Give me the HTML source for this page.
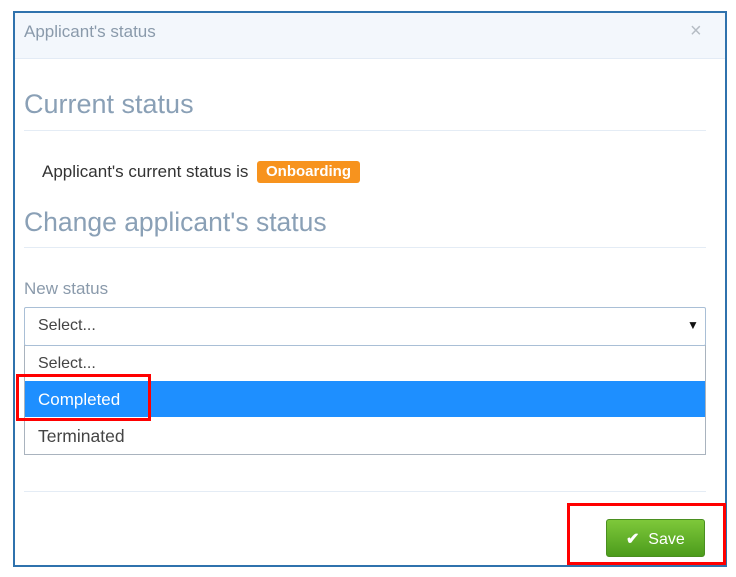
<!DOCTYPE html>
<html><head><style>
body{margin:0;width:736px;height:577px;background:#fff;position:relative;overflow:hidden;font-family:"Liberation Sans",sans-serif}
div,span{position:absolute;box-sizing:border-box}
.modal{left:13px;top:11px;width:714px;height:556px;border:2px solid #2f72ad;background:#fff}
.hdr{left:15px;top:13px;width:710px;height:46px;background:#f3f7fc;border-bottom:1px solid #e3ebf5}
.t{white-space:nowrap}
.line{height:1px;background:#e4ecf5;left:24px;width:682px}
</style></head><body>
<div class="modal"></div>
<div class="hdr"></div>
<div class="t" style="left:24px;top:22px;font-size:17px;color:#8a9aab">Applicant's status</div>
<div class="t" style="left:690px;top:20px;font-size:20px;color:#b5bcc4">×</div>
<div class="t" style="left:24px;top:89px;font-size:27px;color:#8aa0b6">Current status</div>
<div class="line" style="top:130px"></div>
<div class="t" style="left:42px;top:162px;font-size:17px;color:#333">Applicant's current status is</div>
<div class="t" style="left:257px;top:161px;width:103px;height:22px;background:#f7931e;border-radius:3px;color:#fff;font-weight:bold;font-size:15px;text-align:center;line-height:22px">Onboarding</div>
<div class="t" style="left:24px;top:207px;font-size:26.5px;color:#8aa0b6">Change applicant's status</div>
<div class="line" style="top:247px"></div>
<div class="t" style="left:24px;top:279px;font-size:17px;color:#8a9aab">New status</div>
<div style="left:24px;top:307px;width:682px;height:39px;border:1px solid #a9bfd6;border-radius:2px"></div>
<div class="t" style="left:38px;top:317px;font-size:16px;color:#444">Select...</div>
<div class="t" style="left:687px;top:318px;font-size:12px;color:#111">▼</div>
<div style="left:24px;top:345px;width:682px;height:110px;border:1px solid #a9b3be;border-top:none"></div>
<div class="t" style="left:38px;top:355px;font-size:16px;color:#444">Select...</div>
<div style="left:25px;top:381px;width:680px;height:36px;background:#1e8fff"></div>
<div class="t" style="left:38px;top:390px;font-size:17px;color:#fff">Completed</div>
<div class="t" style="left:38px;top:426px;font-size:17.5px;color:#444">Terminated</div>
<div style="left:16px;top:374px;width:135px;height:47px;border:3px solid #f00"></div>
<div class="line" style="top:491px"></div>
<div style="left:606px;top:519px;width:99px;height:38px;border-radius:3px;background:linear-gradient(#7ec83a,#4c9c1c);border:1px solid #4a8f20"></div>
<div class="t" style="left:626px;top:529px;font-size:16px;color:#fff"><b>✔</b>&nbsp;&nbsp;Save</div>
<div style="left:567px;top:503px;width:159px;height:62px;border:3px solid #f00"></div>
</body></html>
